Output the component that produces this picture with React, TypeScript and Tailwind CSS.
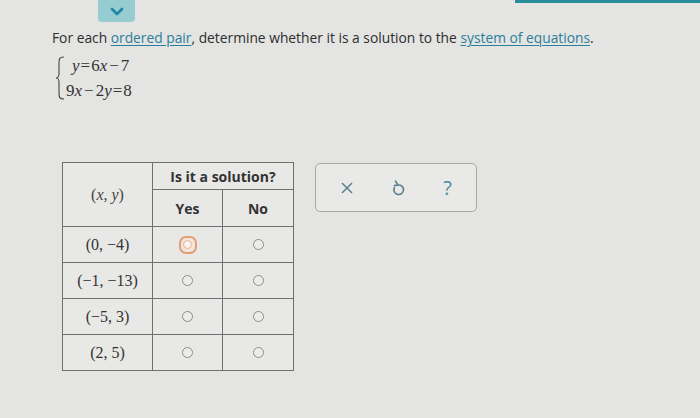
import React from "react";

const serif = { fontFamily: '"Liberation Serif", "DejaVu Serif", serif' };

function Radio({ selected }: { selected?: boolean }) {
  if (selected) {
    return (
      <span className="inline-flex items-center justify-center w-[18px] h-[18px] rounded-[7px] border-[2.5px] border-[#e09f76] bg-[#f2e6dc]">
        <span className="w-[9px] h-[9px] rounded-full border-[1.5px] border-[#e7b08e] bg-[#f6f4f1]" />
      </span>
    );
  }
  return <span className="inline-block w-[11px] h-[11px] rounded-full border-[1.5px] border-[#8c8c8c] bg-[#ececea]" />;
}

function Pair({ a, b }: { a: string; b: string }) {
  return (
    <span style={serif} className="text-[16px] text-[#333]">
      ({a}, {b})
    </span>
  );
}

export default function App() {
  const rows: [string, string, boolean][] = [
    ["0", "\u22124", true],
    ["\u22121", "\u221213", false],
    ["\u22125", "3", false],
    ["2", "5", false],
  ];
  return (
    <div
      className="w-[700px] h-[418px] overflow-hidden bg-[#e4e4e2] text-[#2b2b2b] flex flex-col"
      style={{ fontFamily: '"Open Sans", "Liberation Sans", sans-serif' }}
    >
      <div className="flex items-start h-[22px]">
        <div className="ml-[98px] w-[37px] h-[22px] rounded-b-[4px] bg-[#96ccd2] flex items-center justify-center">
          <svg width="14" height="9" viewBox="0 0 14 9">
            <path d="M2 2 L7 7 L12 2" fill="none" stroke="#1f86a0" strokeWidth="2.6" strokeLinecap="round" strokeLinejoin="round" />
          </svg>
        </div>
        <div className="flex-1" />
        <div className="w-[185px] h-[3px] bg-[#2b8d9c]" />
      </div>

      <p className="ml-[52px] mt-[7px] text-[13.8px] leading-[18px] text-[#2e2e2e]">
        For each <span className="text-[#2a7f9c] underline underline-offset-2">ordered pair</span>, determine whether it is a solution to the{" "}
        <span className="text-[#2a7f9c] underline underline-offset-2">system of equations</span>.
      </p>

      <div className="ml-[55px] mt-[6px] flex items-center">
        <svg width="10" height="44" viewBox="0 0 10 44">
          <path d="M9 1 C4 1 4 3 4 8 L4 18 C4 21 2 22 1 22 C2 22 4 23 4 26 L4 36 C4 41 4 43 9 43" fill="none" stroke="#444" strokeWidth="1.1" />
        </svg>
        <div style={serif} className="ml-[1px] flex flex-col text-[17px] leading-[25px] text-[#333]">
          <span className="ml-[6px]">
            <i>y</i>
            <span className="mx-[1px]">=</span>6<i>x</i>
            <span className="mx-[2px]">−</span>7
          </span>
          <span>
            9<i>x</i>
            <span className="mx-[2px]">−</span>2<i>y</i>
            <span className="mx-[1px]">=</span>8
          </span>
        </div>
      </div>

      <div className="ml-[62px] mt-[59px] flex items-start">
        <table className="border-collapse border border-[#707070] bg-[#e8e8e6]">
          <tbody>
            <tr className="h-[27px]">
              <td rowSpan={2} className="w-[90px] border border-[#707070] text-center">
                <span style={serif} className="text-[16px] text-[#444]">
                  (<i>x</i>, <i>y</i>)
                </span>
              </td>
              <td colSpan={2} className="border border-[#707070] text-center text-[14px] font-bold text-[#333]">
                Is it a solution?
              </td>
            </tr>
            <tr className="h-[37px]">
              <td className="w-[70px] border border-[#707070] text-center text-[14px] font-bold text-[#333]">Yes</td>
              <td className="w-[71px] border border-[#707070] text-center text-[14px] font-bold text-[#333]">No</td>
            </tr>
            {rows.map(([a, b, sel], i) => (
              <tr key={i} className="h-[36px]">
                <td className="border border-[#707070] text-center">
                  <Pair a={a} b={b} />
                </td>
                <td className="border border-[#707070] text-center">
                  <div className="flex items-center justify-center">
                    <Radio selected={sel} />
                  </div>
                </td>
                <td className="border border-[#707070] text-center">
                  <div className="flex items-center justify-center">
                    <Radio />
                  </div>
                </td>
              </tr>
            ))}
          </tbody>
        </table>

        <div className="ml-[21px] mt-[1px] w-[162px] h-[49px] rounded-[5px] border border-[#a8a8a8] bg-[#e9e9e8] flex items-center justify-between pl-[24px] pr-[24px]">
          <svg width="14" height="14" viewBox="0 0 14 14">
            <path d="M2 2 L12 12 M12 2 L2 12" stroke="#5f7f8f" strokeWidth="1.5" />
          </svg>
          <svg width="14" height="17" viewBox="0 0 14 17">
            <path d="M6 6 A4.8 4.8 0 1 1 2.4 8.6" fill="none" stroke="#5f7f8f" strokeWidth="1.6" strokeLinecap="round" />
            <path d="M3.6 2.2 L6 6 L2.4 6.6" fill="none" stroke="#5f7f8f" strokeWidth="1.6" strokeLinejoin="round" strokeLinecap="round" />
          </svg>
          <span className="text-[20px] text-[#4f8a9e] leading-none">?</span>
        </div>
      </div>
    </div>
  );
}
